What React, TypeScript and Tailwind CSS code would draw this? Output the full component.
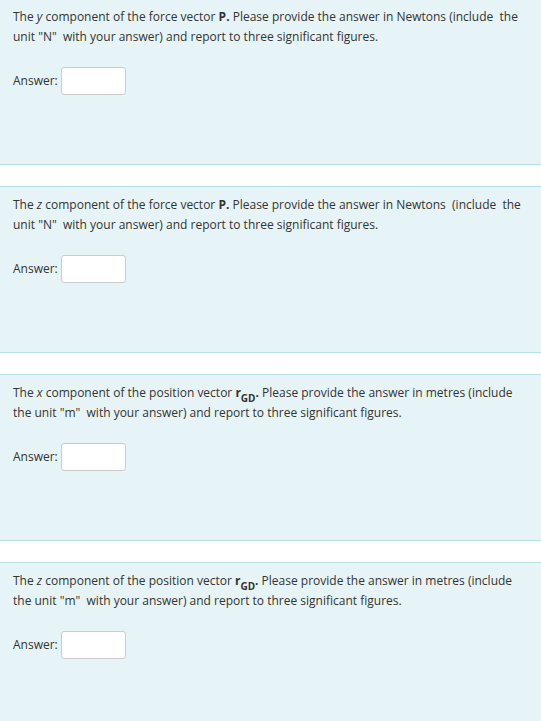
const questions = [
  {
    line1: (
      <>
        The <i>y</i> component of the force vector <b>P.</b> Please provide the answer in Newtons (include{'\u00a0 '}the
      </>
    ),
    line2: <>unit "N"{'\u00a0 '}with your answer) and report to three significant figures.</>,
  },
  {
    line1: (
      <>
        The <i>z</i> component of the force vector <b>P.</b> Please provide the answer in Newtons{'\u00a0 '}(include{'\u00a0 '}the
      </>
    ),
    line2: <>unit "N"{'\u00a0 '}with your answer) and report to three significant figures.</>,
  },
  {
    line1: (
      <>
        The <i>x</i> component of the position vector{' '}
        <b>
          r<sub className="align-[-2px] text-[10px] leading-none">GD</sub>.
        </b>{' '}
        Please provide the answer in metres (include
      </>
    ),
    line2: <>the unit "m"{'\u00a0 '}with your answer) and report to three significant figures.</>,
  },
  {
    line1: (
      <>
        The <i>z</i> component of the position vector{' '}
        <b>
          r<sub className="align-[-2px] text-[10px] leading-none">GD</sub>.
        </b>{' '}
        Please provide the answer in metres (include
      </>
    ),
    line2: <>the unit "m"{'\u00a0 '}with your answer) and report to three significant figures.</>,
  },
];

export default function App() {
  return (
    <div
      className="-mt-[2px] min-h-[723px] bg-white text-[12px] leading-[19.5px] text-[#333]"
      style={{ fontFamily: '"Open Sans", "Liberation Sans", sans-serif' }}
    >
      {questions.map((q, i) => (
        <section
          key={i}
          className="mb-[21px] border-y border-[#b6e1ec] bg-[#e7f4f7] px-[13px] pt-[8px] pb-[69px]"
        >
          <p className="whitespace-nowrap">
            {q.line1}
            <br />
            {q.line2}
          </p>
          <div className="mt-[21px] flex items-center gap-[3px]">
            <span>Answer:</span>
            <input
              type="text"
              aria-label="Answer"
              className="h-[28px] w-[65px] rounded-[3px] border border-[#cccccc] bg-white px-1"
            />
          </div>
        </section>
      ))}
    </div>
  );
}
